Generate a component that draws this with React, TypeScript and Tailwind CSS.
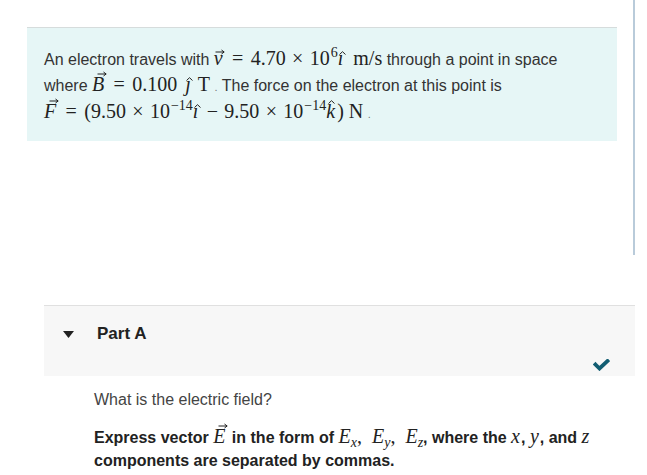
import type { ReactNode } from "react";

const MATH = { fontFamily: '"Liberation Serif", "Times New Roman", serif' };

function Arrow({ top, left }: { top: number; left: number }) {
  return (
    <svg
      width="10"
      height="6"
      viewBox="0 0 10 6"
      className="absolute"
      style={{ top, left }}
    >
      <path d="M0.5 3H9M6.5 1L9.2 3L6.5 5" fill="none" stroke="currentColor" strokeWidth="1" />
    </svg>
  );
}

function Caret({ top, left }: { top: number; left: number }) {
  return (
    <svg width="7" height="4" viewBox="0 0 7 4" className="absolute" style={{ top, left }}>
      <path d="M0.5 3.5L3.5 0.7L6.5 3.5" fill="none" stroke="currentColor" strokeWidth="1" />
    </svg>
  );
}

function Vec({ children, cap = false }: { children: ReactNode; cap?: boolean }) {
  return (
    <span className="relative inline-block pr-[2px] italic leading-none">
      {children}
      <Arrow top={cap ? -3 : 1} left={cap ? 5 : 1} />
    </span>
  );
}

function Hat({ children, tall = false }: { children: ReactNode; tall?: boolean }) {
  return (
    <span className="relative inline-block pr-[2px] italic leading-none">
      {children}
      <Caret top={tall ? -1 : 3} left={tall ? 2 : 1} />
    </span>
  );
}

// binary operator / relation with TeX-like spacing
function Op({ children, rel = false }: { children: ReactNode; rel?: boolean }) {
  return (
    <span
      className={
        rel
          ? "mx-[5px] inline-block w-[16px] text-center"
          : "mx-[4px] inline-block w-[16px] text-center"
      }
    >
      {children}
    </span>
  );
}

function M({ children }: { children: ReactNode }) {
  return (
    <span style={MATH} className="whitespace-nowrap text-[20px] leading-none text-[#222]">
      {children}
    </span>
  );
}

function Sup({ children }: { children: ReactNode }) {
  return (
    <sup className="relative top-[-8px] ml-[1px] align-baseline text-[14px] leading-none">
      {children}
    </sup>
  );
}

function Sub({ children }: { children: ReactNode }) {
  return (
    <sub className="relative top-[4px] align-baseline text-[14px] italic leading-none">
      {children}
    </sub>
  );
}

export default function App() {
  return (
    <div
      className="relative min-h-[475px] w-[647px] bg-white text-[16px] text-[#333]"
      style={{ fontFamily: '"Liberation Sans", Arial, sans-serif' }}
    >
      <div className="absolute left-[633px] top-0 h-[255px] w-[2px] bg-[#b9cbda]" />

      <div className="px-[27px] pt-[27px]">
        <div className="w-[590px] border-t border-[#d6dcdc] bg-[#e6f6f6] pb-[14px] pl-[17px] pr-2 pt-[19px] leading-[26px]">
          <div>
            An electron travels with{" "}
            <M>
              <Vec>v</Vec>
              <Op rel>=</Op>4.70<Op>×</Op>10<Sup>6</Sup>
              <Hat>ı</Hat>
              <span className="ml-[8px]">m/s</span>
            </M>{" "}
            through a point in space
          </div>
          <div>
            where{" "}
            <M>
              <Vec cap>B</Vec>
              <Op rel>=</Op>0.100
              <span className="ml-[8px]">
                <Hat>ȷ</Hat>
              </span>
              <span className="ml-[5px]">T</span>
            </M>{" "}
            <span className="text-[11px] text-[#777]">.</span> The force on the electron at this point is
          </div>
          <div>
            <M>
              <Vec cap>F</Vec>
              <Op rel>=</Op>(9.50<Op>×</Op>10<Sup>−14</Sup>
              <Hat>ı</Hat>
              <Op>−</Op>9.50<Op>×</Op>10<Sup>−14</Sup>
              <Hat tall>k</Hat>) N
            </M>{" "}
            <span className="text-[11px] text-[#777]">.</span>
          </div>
        </div>
      </div>

      <div className="ml-[44px] mt-[164px] w-[591px] border-t border-[#e0e0e0] bg-[#f7f7f7]">
        <div className="flex h-[56px] items-center">
          <svg width="11" height="7" viewBox="0 0 11 7" className="ml-[19px]">
            <polygon points="0,0 11,0 5.5,7" fill="#222" />
          </svg>
          <span className="ml-[23px] text-[17px] font-bold text-[#222]">Part A</span>
        </div>
        <div className="flex h-[14px] justify-end pr-[25px]">
          <svg width="17" height="12" viewBox="0 0 17 12" className="-mt-[3px]">
            <polyline
              points="2.5,5.5 6.5,9.5 14.5,2"
              fill="none"
              stroke="#125d72"
              strokeWidth="3.8"
              strokeLinecap="square"
            />
          </svg>
        </div>
      </div>

      <div className="pl-[94px] pt-[12px]">
        <div className="leading-[24px] text-[#444]">What is the electric field?</div>
        <div className="mt-[14px] font-bold leading-[23px] text-[#222]">
          Express vector{" "}
          <M>
            <span className="font-normal">
              <Vec cap>E</Vec>
            </span>
          </M>{" "}
          in the form of{" "}
          <M>
            <span className="font-normal">
              <i>E</i>
              <Sub>x</Sub>,&nbsp; <i>E</i>
              <Sub>y</Sub>,&nbsp; <i>E</i>
              <Sub>z</Sub>
            </span>
          </M>
          , where the{" "}
          <M>
            <span className="pr-[1px] font-normal italic">x</span>
          </M>
          ,{" "}
          <M>
            <span className="pr-[1px] font-normal italic">y</span>
          </M>
          , and{" "}
          <M>
            <span className="font-normal italic">z</span>
          </M>
          <br />
          components are separated by commas.
        </div>
      </div>
    </div>
  );
}
